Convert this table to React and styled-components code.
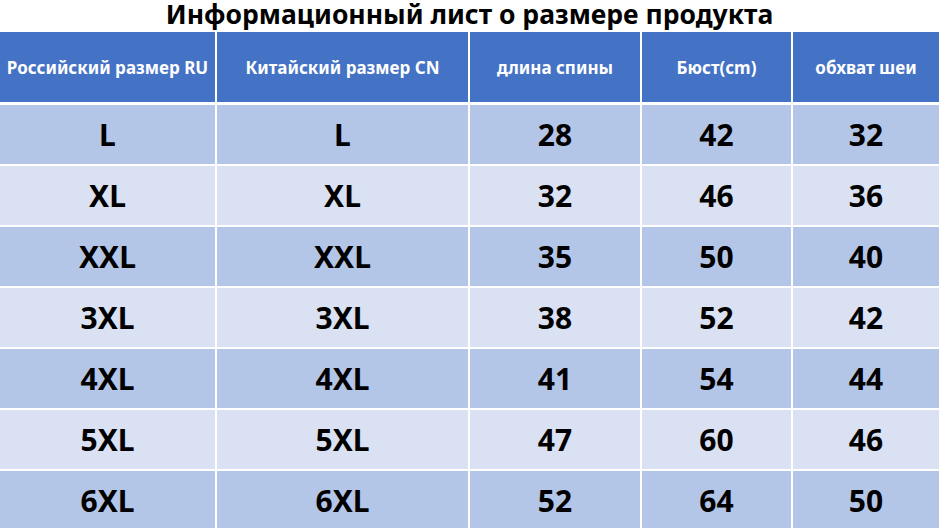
import React from "react";
import styled, { createGlobalStyle } from "styled-components";

const Global = createGlobalStyle`
  html, body { margin: 0; padding: 0; background: #fff; }
  body { width: 939px; height: 528px; overflow: hidden; font-family: "Noto Sans", "Open Sans", sans-serif; }
`;

const Page = styled.div`
  width: 939px;
  height: 528px;
  overflow: hidden;
  display: flex;
  flex-direction: column;
`;

const Title = styled.h1`
  margin: 0 0 4px;
  flex: 0 0 28px;
  height: 28px;
  line-height: 28px;
  font-size: 26.5px;
  font-weight: 700;
  color: #000;
  text-align: center;
  white-space: nowrap;
`;

const Grid = styled.div`
  display: grid;
  grid-template-columns: 215px 251px 170px 149px 146px;
  grid-template-rows: 71px;
  grid-auto-rows: 59px;
  column-gap: 2px;
  row-gap: 2px;
`;

const HeadCell = styled.div`
  background: #4472c4;
  color: #fff;
  font-size: 17px;
  font-weight: 700;
  display: flex;
  align-items: center;
  justify-content: center;
  white-space: nowrap;
  margin-bottom: 1px;
`;

const Cell = styled.div`
  background: ${(p) => (p.$alt ? "#d9e1f2" : "#b4c6e7")};
  color: #000;
  font-size: 30px;
  font-weight: 700;
  display: flex;
  align-items: center;
  justify-content: center;
`;

const headers = [
  "Российский размер RU",
  "Китайский размер CN",
  "длина спины",
  "Бюст(cm)",
  "обхват шеи",
];

const rows = [
  ["L", "L", "28", "42", "32"],
  ["XL", "XL", "32", "46", "36"],
  ["XXL", "XXL", "35", "50", "40"],
  ["3XL", "3XL", "38", "52", "42"],
  ["4XL", "4XL", "41", "54", "44"],
  ["5XL", "5XL", "47", "60", "46"],
  ["6XL", "6XL", "52", "64", "50"],
];

export default function App() {
  return (
    <>
      <Global />
      <Page>
        <Title>Информационный лист о размере продукта</Title>
        <Grid>
          {headers.map((h) => (
            <HeadCell key={h}>{h}</HeadCell>
          ))}
          {rows.map((r, i) =>
            r.map((v, j) => (
              <Cell key={i + "-" + j} $alt={i % 2 === 1}>
                {v}
              </Cell>
            ))
          )}
        </Grid>
      </Page>
    </>
  );
}
